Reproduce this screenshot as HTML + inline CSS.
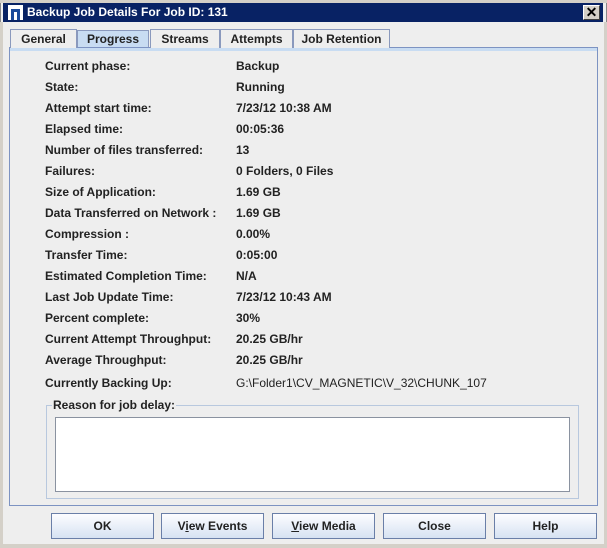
<!DOCTYPE html>
<html><head><style>
*{margin:0;padding:0;box-sizing:border-box}
body{width:607px;height:548px;background:#d4d0c8;position:relative;overflow:hidden;font-family:"Liberation Sans",sans-serif;font-size:12px;color:#222}
.win{position:absolute;left:0;top:0;width:607px;height:548px;border:1px solid #888;background:#eeeeee}
.title{position:absolute;left:3px;top:3px;width:600px;height:19px;background:#082264;color:#fff;font-weight:bold;font-size:12px;line-height:19px;padding-left:24px}
.ico{position:absolute;left:5px;top:2px;width:15px;height:15px;background:#fff}
.ico:after{content:"";position:absolute;left:3px;top:4px;width:9px;height:11px;background:#1a4a9a}
.ico:before{content:"";position:absolute;left:6px;top:7px;width:3px;height:8px;background:#fff;z-index:1}
.x{position:absolute;right:3px;top:2px;width:17px;height:15px;background:#d4d0c8;border:1px solid;border-color:#fff #404040 #404040 #fff;color:#000;font-size:14px;line-height:13px;text-align:center;font-weight:bold}
.side{position:absolute;top:22px;bottom:0;width:3px;background:#d4d0c8}
.tab{position:absolute;top:29px;height:19px;border:1px solid #8a99bd;border-bottom:none;background:#eeeeee;font-size:12px;font-weight:bold;text-align:center;line-height:19px;color:#222}
.tab.sel{background:#c8dcf2;top:30px;height:17px;line-height:17px}
.panel{position:absolute;left:9px;top:47px;width:589px;height:459px;border:1px solid #7d93c2;background:#eeeeee}
.panel:before{content:"";position:absolute;left:0;top:0;right:0;height:3px;background:#c8dcf2}
.r{position:absolute;font-weight:bold;font-size:12px;white-space:nowrap}
.gb{position:absolute;left:46px;top:405px;width:533px;height:94px;border:1px solid #b8c8de}
.gl{position:absolute;left:52px;top:398px;background:#eeeeee;font-weight:bold;padding:0 1px}
.ta{position:absolute;left:55px;top:417px;width:515px;height:75px;background:#fff;border:1px solid #8a92a0}
.btn{position:absolute;top:513px;width:103px;height:26px;border:1px solid #6a7fa8;background:linear-gradient(#fdfdff,#d6e2f2);font-weight:bold;text-align:center;line-height:25px}
.bot{position:absolute;left:3px;top:544px;width:601px;height:4px;background:#d4d0c8}
</style></head><body>
<div class="win"></div>
<div class="side" style="left:0"></div><div class="side" style="right:0"></div>
<div class="bot"></div>
<div style="position:absolute;left:0;top:0;width:607px;height:3px;background:#d4d0c8"></div>
<div class="title"><div class="ico"></div>Backup Job Details For Job ID: 131<div class="x">✕</div></div>
<div class="panel"></div>
<div class="tab" style="left:10px;width:67px">General</div>
<div class="tab sel" style="left:77px;width:72px">Progress</div>
<div class="tab" style="left:150px;width:70px">Streams</div>
<div class="tab" style="left:220px;width:73px">Attempts</div>
<div class="tab" style="left:293px;width:97px">Job Retention</div>

<div class="r" style="left:45px;top:59px">Current phase:</div><div class="r" style="left:236px;top:59px">Backup</div>
<div class="r" style="left:45px;top:80px">State:</div><div class="r" style="left:236px;top:80px">Running</div>
<div class="r" style="left:45px;top:101px">Attempt start time:</div><div class="r" style="left:236px;top:101px">7/23/12 10:38 AM</div>
<div class="r" style="left:45px;top:122px">Elapsed time:</div><div class="r" style="left:236px;top:122px">00:05:36</div>
<div class="r" style="left:45px;top:143px">Number of files transferred:</div><div class="r" style="left:236px;top:143px">13</div>
<div class="r" style="left:45px;top:164px">Failures:</div><div class="r" style="left:236px;top:164px">0 Folders, 0 Files</div>
<div class="r" style="left:45px;top:185px">Size of Application:</div><div class="r" style="left:236px;top:185px">1.69 GB</div>
<div class="r" style="left:45px;top:206px">Data Transferred on Network :</div><div class="r" style="left:236px;top:206px">1.69 GB</div>
<div class="r" style="left:45px;top:227px">Compression :</div><div class="r" style="left:236px;top:227px">0.00%</div>
<div class="r" style="left:45px;top:248px">Transfer Time:</div><div class="r" style="left:236px;top:248px">0:05:00</div>
<div class="r" style="left:45px;top:269px">Estimated Completion Time:</div><div class="r" style="left:236px;top:269px">N/A</div>
<div class="r" style="left:45px;top:290px">Last Job Update Time:</div><div class="r" style="left:236px;top:290px">7/23/12 10:43 AM</div>
<div class="r" style="left:45px;top:311px">Percent complete:</div><div class="r" style="left:236px;top:311px">30%</div>
<div class="r" style="left:45px;top:332px">Current Attempt Throughput:</div><div class="r" style="left:236px;top:332px">20.25 GB/hr</div>
<div class="r" style="left:45px;top:353px">Average Throughput:</div><div class="r" style="left:236px;top:353px">20.25 GB/hr</div>
<div class="r" style="left:45px;top:376px">Currently Backing Up:</div><div class="r" style="left:236px;top:376px;font-weight:normal">G:\Folder1\CV_MAGNETIC\V_32\CHUNK_107</div>

<div class="gb"></div>
<div class="gl">Reason for job delay:</div>
<div class="ta"></div>

<div class="btn" style="left:51px">OK</div>
<div class="btn" style="left:161px">V<u>i</u>ew Events</div>
<div class="btn" style="left:272px"><u>V</u>iew Media</div>
<div class="btn" style="left:383px">Close</div>
<div class="btn" style="left:494px">Help</div>
</body></html>
